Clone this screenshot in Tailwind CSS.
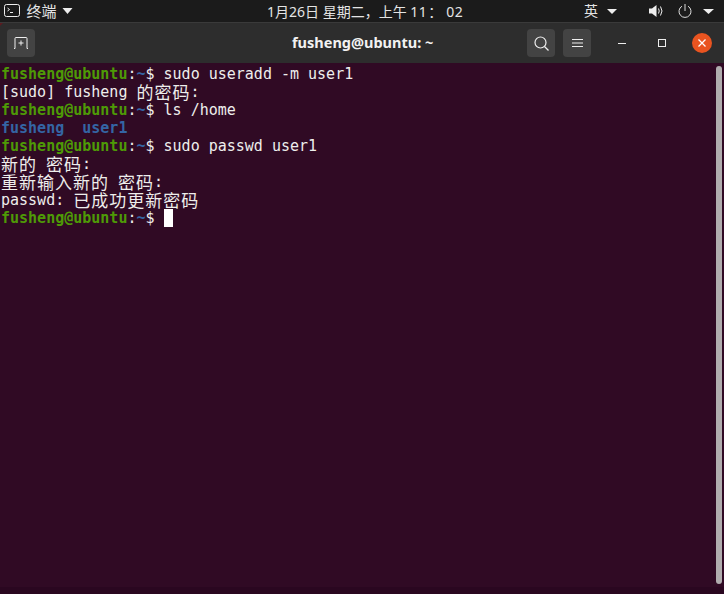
<!DOCTYPE html>
<html lang="zh-CN">
<head>
<meta charset="utf-8">
<script src="https://cdn.jsdelivr.net/npm/@tailwindcss/browser@4"></script>
</head>
<body class="w-[724px] h-[594px] overflow-hidden bg-[#300a24] font-['Noto_Sans','Noto_Sans_CJK_SC',sans-serif]">
<div class="flex flex-col h-[594px]">
  <!-- top panel -->
  <div class="relative h-[22px] shrink-0 bg-[#1b1b1b] text-[#e4e4e4] flex items-center text-[14px] leading-[22px]">
    <svg class="ml-[4px] w-[16px] h-[14px]" viewBox="0 0 16 14" fill="none" stroke="#eeeeee"><rect x="0.5" y="0.5" width="15" height="12" rx="2"/><path d="M3.5 4l2 1.5-2 1.5M6 8.5h3" stroke-width="1"/></svg>
    <span class="ml-[6.5px] text-[15px] leading-[22px]">终端</span>
    <svg class="ml-[5px] w-[11px] h-[6px]" viewBox="0 0 11 6"><path d="M0.5 0h10L5.5 6z" fill="#eeeeee"/></svg>
    <span class="absolute left-[267px] top-0 whitespace-nowrap">1月26日 星期二，上午 <span class="tracking-[0.5px]">11</span><span class="font-['Noto_Sans_CJK_TC'] ml-[1px] mr-[4px]">：</span><span class="tracking-[0.5px]">02</span></span>
    <div class="ml-auto flex items-center">
      <span class="text-[14px]">英</span>
      <svg class="ml-[9px] w-[10px] h-[5px]" viewBox="0 0 10 5"><path d="M0 0h10L5 5z" fill="#eeeeee"/></svg>
      <svg class="ml-[32px] w-[15px] h-[14px]" viewBox="0 0 15 14" fill="#eeeeee"><path d="M0 4.5h3L7.5 1v12L3 9.5H0z"/><path d="M9.5 4.5q1.5 2.500 0 5M11.500 2.500q3 4.500 0 9" fill="none" stroke="#eeeeee"/></svg>
      <svg class="ml-[14px] w-[14px] h-[14px]" viewBox="0 0 14 14" fill="none" stroke="#dddddd"><path d="M4 2.200a6 6 0 1 0 6 0M7 0v7"/></svg>
      <svg class="ml-[11px] mr-[10px] w-[11px] h-[5px]" viewBox="0 0 11 5"><path d="M0 0h11L5.500 5z" fill="#eeeeee"/></svg>
    </div>
  </div>
  <!-- header bar -->
  <div class="relative h-[41px] shrink-0 bg-[#2d2d2d] border-t border-[#3a3a3a] flex items-center text-[#f2f2f2]">
    <div class="absolute left-0 top-0 w-[3px] h-[3px] bg-[#5c1a20] [clip-path:polygon(0_0,100%_0,0_100%)]"></div>
    <div class="ml-[7px] w-[28px] h-[28px] rounded-[4px] bg-[#434343] flex items-center justify-center">
      <svg class="w-[16px] h-[12px]" viewBox="0 0 16 12" fill="none" stroke="#eeeeee"><path d="M1 11.500h1V1.500a1 1 0 0 1 1-1h10a1 1 0 0 1 1 1v10h1"/><path d="M8 3.500v5M5.500 6h5"/></svg>
    </div>
    <span class="absolute left-[292px] top-[10px] text-[14.5px] leading-[19px] font-bold whitespace-nowrap font-['Noto_Sans']">fusheng@ubuntu: ~</span>
    <div class="ml-auto flex items-center">
      <div class="w-[28px] h-[28px] rounded-[4px] bg-[#434343] flex items-center justify-center">
        <svg class="w-[15px] h-[15px]" viewBox="0 0 15 15" fill="none" stroke="#eeeeee" stroke-width="1.200"><circle cx="6.500" cy="6.500" r="5.500"/><path d="M10.500 10.500l4 4"/></svg>
      </div>
      <div class="ml-[8px] w-[28px] h-[28px] rounded-[4px] bg-[#434343] flex items-center justify-center">
        <svg class="w-[11px] h-[10px]" viewBox="0 0 11 10" stroke="#eeeeee"><path d="M0 1.500h11M0 5h11M0 8.500h11"/></svg>
      </div>
      <svg class="ml-[27px] w-[8px] h-[2px]" viewBox="0 0 8 2"><rect width="8" height="1" y="1" fill="#eeeeee"/></svg>
      <svg class="ml-[32px] w-[8px] h-[8px]" viewBox="0 0 8 8" fill="none" stroke="#eeeeee"><rect x="0.500" y="0.500" width="7" height="7"/></svg>
      <div class="ml-[26px] mr-[12px] w-[20px] h-[20px] rounded-full bg-[#e95420] flex items-center justify-center">
        <svg class="w-[8px] h-[8px]" viewBox="0 0 8 8" stroke="#ffffff" stroke-width="1.300"><path d="M0.500 0.500l7 7M7.500 0.500l-7 7"/></svg>
      </div>
    </div>
  </div>
  <!-- terminal -->
  <div class="relative flex-1 flex bg-[#300a24] border-b-[7px] border-[#2a0720]">
    <div class="flex-1 pt-[2px] pl-[1px] text-[15px] leading-[18px] text-[#eeeeec] font-['DejaVu_Sans_Mono','Noto_Sans_CJK_SC',monospace]">
      <div class="h-[18px] whitespace-pre"><b class="text-[#4e9a06]">fusheng@ubuntu</b>:<b class="text-[#3465a4]">~</b>$ sudo useradd -m user1</div>
      <div class="h-[18px] whitespace-pre">[sudo] fusheng <span class="inline-block h-[18px] w-[54px] text-[17px] tracking-[1px] leading-[17px] align-top font-['Noto_Sans_CJK_SC']">的密码</span>:</div>
      <div class="h-[18px] whitespace-pre"><b class="text-[#4e9a06]">fusheng@ubuntu</b>:<b class="text-[#3465a4]">~</b>$ ls /home</div>
      <div class="h-[18px] whitespace-pre"><b class="text-[#3465a4]">fusheng</b>  <b class="text-[#3465a4]">user1</b></div>
      <div class="h-[18px] whitespace-pre"><b class="text-[#4e9a06]">fusheng@ubuntu</b>:<b class="text-[#3465a4]">~</b>$ sudo passwd user1</div>
      <div class="h-[18px] whitespace-pre"><span class="inline-block h-[18px] w-[36px] text-[17px] tracking-[1px] leading-[17px] align-top font-['Noto_Sans_CJK_SC']">新的</span> <span class="inline-block h-[18px] w-[36px] text-[17px] tracking-[1px] leading-[17px] align-top font-['Noto_Sans_CJK_SC']">密码</span>:</div>
      <div class="h-[18px] whitespace-pre"><span class="inline-block h-[18px] w-[108px] text-[17px] tracking-[1px] leading-[17px] align-top font-['Noto_Sans_CJK_SC']">重新输入新的</span> <span class="inline-block h-[18px] w-[36px] text-[17px] tracking-[1px] leading-[17px] align-top font-['Noto_Sans_CJK_SC']">密码</span>:</div>
      <div class="h-[18px] whitespace-pre">passwd: <span class="inline-block h-[18px] w-[126px] text-[17px] tracking-[1px] leading-[17px] align-top font-['Noto_Sans_CJK_SC']">已成功更新密码</span></div>
      <div class="h-[18px] flex whitespace-pre"><span><b class="text-[#4e9a06]">fusheng@ubuntu</b>:<b class="text-[#3465a4]">~</b>$ </span><span class="w-[9px] h-[18px] bg-white"></span></div>
    </div>
    <div class="w-[6px] mr-[2px] mt-[3px] mb-[3px] rounded-full bg-[#b0acae]"></div>
  </div>
</div>
</body>
</html>
